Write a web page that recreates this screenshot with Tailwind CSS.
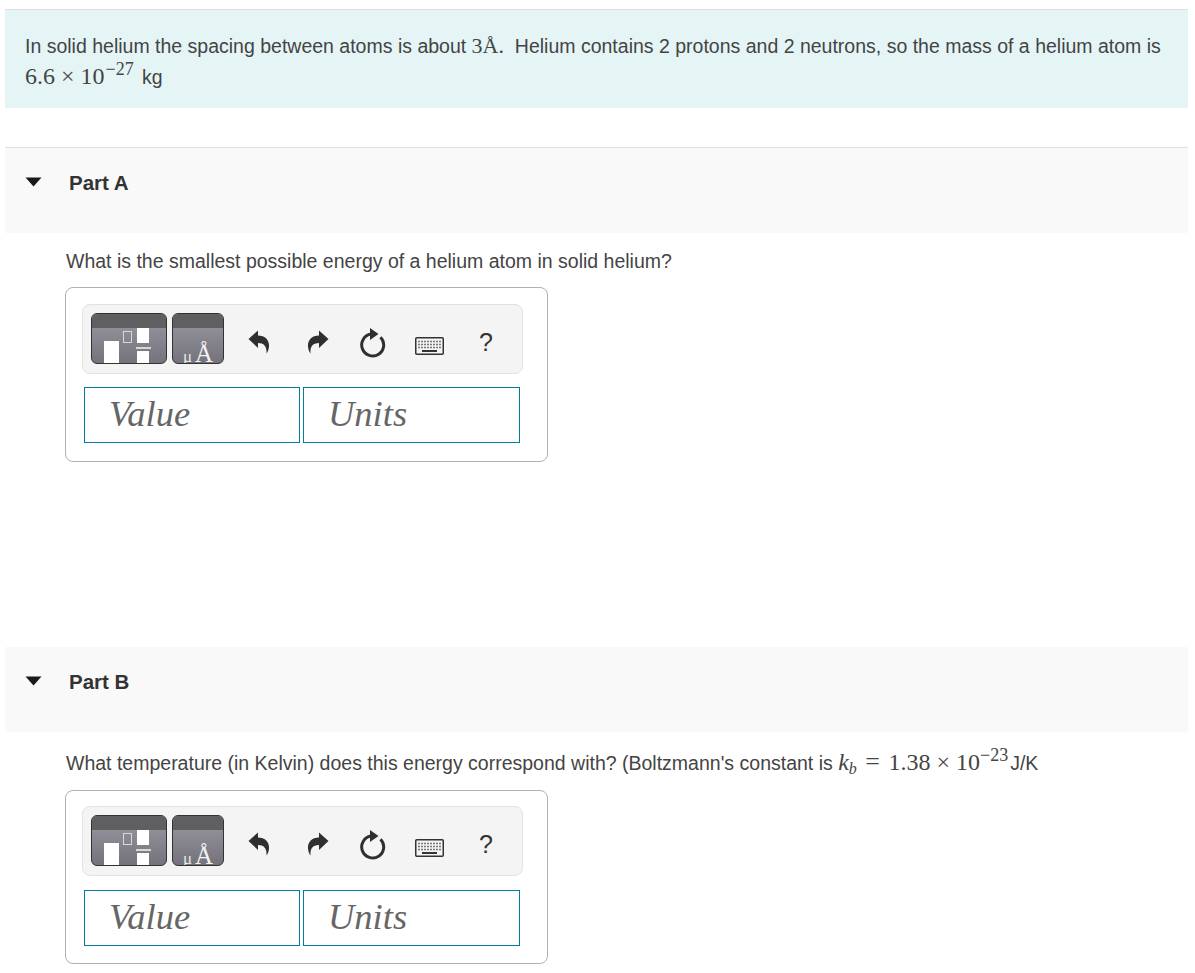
<!DOCTYPE html>
<html>
<head>
<meta charset="utf-8">
<script src="https://cdn.jsdelivr.net/npm/@tailwindcss/browser@4"></script>
</head>
<body class="bg-white overflow-hidden">
<div class="w-[1195px] h-[973px] pt-[9px] pl-[5px] pr-[7px] font-['Liberation_Sans',sans-serif] text-[19.5px] leading-[31px] text-[#444]">
  <div class="h-[99px] border-t border-[#dfdfdf] bg-[#e5f5f6] pl-[20px] pt-[21px]">
    <p class="whitespace-nowrap">In solid helium the spacing between atoms is about <span class="font-['Liberation_Serif',serif] text-[22px] leading-none">3Å.</span>&nbsp; Helium contains 2 protons and 2 neutrons, so the mass of a helium atom is</p>
    <p><span class="font-['Liberation_Serif',serif] text-[24px] leading-none">6.6 × 10<sup class="ml-[1px] text-[18px] -top-[9px] relative align-baseline leading-none">−27</sup></span><span class="ml-[3px]"> kg</span></p>
  </div>
  <div class="mt-[39px] h-[86px] border-t border-[#dfdfdf] bg-[#f9f9f9] flex items-center pb-[17px] pl-[20px]">
    <svg class="w-[17px] h-[10px]" viewBox="0 0 17 10"><path d="M0.5 0.5H16.5L8.5 9.5Z" fill="#1a1a1a"/></svg>
    <span class="ml-[27px] font-bold text-[20.5px] text-[#333]">Part A</span>
  </div>
  <p class="ml-[61px] mt-[13px]">What is the smallest possible energy of a helium atom in solid helium?</p>
  <div class="ml-[60px] mt-[10px] w-[483px] h-[175px] border border-[#b0b0b0] rounded-[8px] pt-[16px] px-[16px]">
    <div class="w-[441px] h-[70px] bg-[#f4f4f4] border border-[#e2e2e2] rounded-[8px] flex items-center pl-[8px] pb-[2px] relative">
      <div class="w-[76px] h-[51px] rounded-[6px] border border-[#333] overflow-hidden bg-gradient-to-b from-[#9b99a3] to-[#74727a] relative flex items-end">
        <div class="absolute top-0 left-0 right-0 h-[14px] bg-[#5f5f61]"></div>
        <div class="ml-[12px] w-[15px] h-[22px] bg-white"></div>
        <div class="absolute left-[31px] top-[17px] w-[9px] h-[12px] border border-[#d8d8d8]"></div>
        <div class="absolute left-[45px] top-[14px] w-[12px] h-[15px] bg-white"></div>
        <div class="absolute left-[44px] top-[33px] w-[15px] h-[2px] bg-[#d8d8d8]"></div>
        <div class="absolute left-[45px] top-[37px] w-[12px] h-[14px] bg-white"></div>
      </div>
      <div class="ml-[5px] w-[52px] h-[51px] rounded-[6px] border border-[#333] overflow-hidden bg-gradient-to-b from-[#9b99a3] to-[#74727a] relative">
        <div class="absolute top-0 left-0 right-0 h-[14px] bg-[#5f5f61]"></div>
        <span class="absolute left-[10px] bottom-[-2px] font-['Liberation_Serif',serif] text-[17px] leading-none text-[#e8e8e8]">μ</span>
        <span class="absolute left-[22px] bottom-[-3px] font-['Liberation_Serif',serif] text-[25px] leading-none text-[#f2f2f2]">Å</span>
      </div>
      <svg class="absolute left-[165px] top-[25px] w-[22px] h-[24px]" viewBox="0 0 22 24"><path d="M0.5 9L10 0.5V5.5C17 5.5 21.5 10 21 16.5C20.8 19 20 21.5 18.5 23.5C19 17 16.5 13 10 13V18Z" fill="#2f2f2f"/></svg>
      <svg class="absolute left-[224px] top-[25px] w-[22px] h-[24px]" viewBox="0 0 22 24"><path d="M21.5 9L12 0.5V5.5C5 5.5 0.5 10 1 16.5C1.2 19 2 21.5 3.5 23.5C3 17 5.5 13 12 13V18Z" fill="#2f2f2f"/></svg>
      <svg class="absolute left-[276px] top-[23px] w-[27px] h-[30px]" viewBox="0 0 27 30"><path d="M12 6.1A11 11 0 1 0 21.5 9.2" fill="none" stroke="#2f2f2f" stroke-width="3"/><path d="M11 0L19.5 6L11 12Z" fill="#2f2f2f"/></svg>
      <svg class="absolute left-[332px] top-[32px] w-[29px] h-[18px]" viewBox="0 0 29 18"><rect x="0.75" y="0.75" width="27.5" height="16.5" rx="1" fill="#f4f4f4" stroke="#333" stroke-width="1.5"/><path d="M3 4.5H26M3 7.5H26M3 10.5H26" stroke="#777" stroke-width="1.5" stroke-dasharray="2 1"/><path d="M7 14H22" stroke="#333" stroke-width="2"/></svg>
      <span class="absolute left-[396px] top-[21px] text-[25px] leading-[32px] text-[#333]">?</span>
    </div>
    <div class="mt-[13px] ml-[2px] flex gap-[3px]">
      <div class="w-[216px] h-[56px] border border-[#007c9e] pl-[24px] font-['Liberation_Serif',serif] italic text-[36.5px] leading-[52px] text-[#666]">Value</div>
      <div class="w-[217px] h-[56px] border border-[#007c9e] pl-[24px] font-['Liberation_Serif',serif] italic text-[36.5px] leading-[52px] text-[#666]">Units</div>
    </div>
  </div>
  <div class="mt-[185px] h-[85px] bg-[#f9f9f9] flex items-center pb-[17px] pl-[20px]">
    <svg class="w-[17px] h-[10px]" viewBox="0 0 17 10"><path d="M0.5 0.5H16.5L8.5 9.5Z" fill="#1a1a1a"/></svg>
    <span class="ml-[27px] font-bold text-[20.5px] text-[#333]">Part B</span>
  </div>
  <p class="ml-[61px] mt-[16px] whitespace-nowrap">What temperature (in Kelvin) does this energy correspond with? (Boltzmann's constant is <span class="font-['Liberation_Serif',serif] text-[24px] leading-none"><i>k<sub class="text-[16px] align-baseline relative top-[4px] leading-none">b</sub></i><span class="text-[26px] leading-none mx-[2px]"> = </span>1.38 × 10<sup class="text-[18px] -top-[9px] relative align-baseline leading-none">−23</sup></span><span class="ml-[2px]">J/K</span></p>
  <div class="ml-[60px] mt-[11px] w-[483px] h-[174px] border border-[#b0b0b0] rounded-[8px] pt-[15px] px-[16px]">
    <div class="w-[441px] h-[70px] bg-[#f4f4f4] border border-[#e2e2e2] rounded-[8px] flex items-center pl-[8px] pb-[2px] relative">
      <div class="w-[76px] h-[51px] rounded-[6px] border border-[#333] overflow-hidden bg-gradient-to-b from-[#9b99a3] to-[#74727a] relative flex items-end">
        <div class="absolute top-0 left-0 right-0 h-[14px] bg-[#5f5f61]"></div>
        <div class="ml-[12px] w-[15px] h-[22px] bg-white"></div>
        <div class="absolute left-[31px] top-[17px] w-[9px] h-[12px] border border-[#d8d8d8]"></div>
        <div class="absolute left-[45px] top-[14px] w-[12px] h-[15px] bg-white"></div>
        <div class="absolute left-[44px] top-[33px] w-[15px] h-[2px] bg-[#d8d8d8]"></div>
        <div class="absolute left-[45px] top-[37px] w-[12px] h-[14px] bg-white"></div>
      </div>
      <div class="ml-[5px] w-[52px] h-[51px] rounded-[6px] border border-[#333] overflow-hidden bg-gradient-to-b from-[#9b99a3] to-[#74727a] relative">
        <div class="absolute top-0 left-0 right-0 h-[14px] bg-[#5f5f61]"></div>
        <span class="absolute left-[10px] bottom-[-2px] font-['Liberation_Serif',serif] text-[17px] leading-none text-[#e8e8e8]">μ</span>
        <span class="absolute left-[22px] bottom-[-3px] font-['Liberation_Serif',serif] text-[25px] leading-none text-[#f2f2f2]">Å</span>
      </div>
      <svg class="absolute left-[165px] top-[25px] w-[22px] h-[24px]" viewBox="0 0 22 24"><path d="M0.5 9L10 0.5V5.5C17 5.5 21.5 10 21 16.5C20.8 19 20 21.5 18.5 23.5C19 17 16.5 13 10 13V18Z" fill="#2f2f2f"/></svg>
      <svg class="absolute left-[224px] top-[25px] w-[22px] h-[24px]" viewBox="0 0 22 24"><path d="M21.5 9L12 0.5V5.5C5 5.5 0.5 10 1 16.5C1.2 19 2 21.5 3.5 23.5C3 17 5.5 13 12 13V18Z" fill="#2f2f2f"/></svg>
      <svg class="absolute left-[276px] top-[23px] w-[27px] h-[30px]" viewBox="0 0 27 30"><path d="M12 6.1A11 11 0 1 0 21.5 9.2" fill="none" stroke="#2f2f2f" stroke-width="3"/><path d="M11 0L19.5 6L11 12Z" fill="#2f2f2f"/></svg>
      <svg class="absolute left-[332px] top-[32px] w-[29px] h-[18px]" viewBox="0 0 29 18"><rect x="0.75" y="0.75" width="27.5" height="16.5" rx="1" fill="#f4f4f4" stroke="#333" stroke-width="1.5"/><path d="M3 4.5H26M3 7.5H26M3 10.5H26" stroke="#777" stroke-width="1.5" stroke-dasharray="2 1"/><path d="M7 14H22" stroke="#333" stroke-width="2"/></svg>
      <span class="absolute left-[396px] top-[21px] text-[25px] leading-[32px] text-[#333]">?</span>
    </div>
    <div class="mt-[14px] ml-[2px] flex gap-[3px]">
      <div class="w-[216px] h-[56px] border border-[#007c9e] pl-[24px] font-['Liberation_Serif',serif] italic text-[36.5px] leading-[52px] text-[#666]">Value</div>
      <div class="w-[217px] h-[56px] border border-[#007c9e] pl-[24px] font-['Liberation_Serif',serif] italic text-[36.5px] leading-[52px] text-[#666]">Units</div>
    </div>
  </div>
</div>
</body>
</html>
